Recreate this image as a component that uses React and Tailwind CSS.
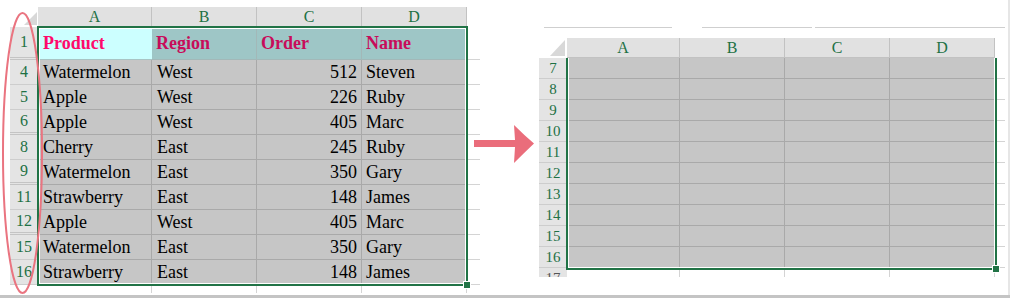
const leftRows = [
  { n: 4, p: 'Watermelon', r: 'West', o: 512, m: 'Steven' },
  { n: 5, p: 'Apple', r: 'West', o: 226, m: 'Ruby' },
  { n: 6, p: 'Apple', r: 'West', o: 405, m: 'Marc', gap: true },
  { n: 8, p: 'Cherry', r: 'East', o: 245, m: 'Ruby' },
  { n: 9, p: 'Watermelon', r: 'East', o: 350, m: 'Gary', gap: true },
  { n: 11, p: 'Strawberry', r: 'East', o: 148, m: 'James' },
  { n: 12, p: 'Apple', r: 'West', o: 405, m: 'Marc', gap: true },
  { n: 15, p: 'Watermelon', r: 'East', o: 350, m: 'Gary' },
  { n: 16, p: 'Strawberry', r: 'East', o: 148, m: 'James' },
]

const rightRows = [7, 8, 9, 10, 11, 12, 13, 14, 15, 16]

function Corner({ pts }) {
  return (
    <div className="w-[28px] h-full bg-white">
      <svg width="28" height="20">
        <polygon points={pts} fill="#d8d8d8" />
      </svg>
    </div>
  )
}

function ColHead({ w, children }) {
  return (
    <div className={`${w} h-full bg-[#e1e1e1] border-r border-b border-[#c2c2c2] flex items-center justify-center text-[16px] text-[#1e7145]`}>
      {children}
    </div>
  )
}

function RowHead({ gap, size = 'text-[16px]', children }) {
  return (
    <div
      className={`w-[28px] h-full bg-[#e4e4e4] flex items-center justify-center font-normal text-[#1e7145] ${size} ${
        gap ? 'border-b-[3px] border-double border-[#c4c4c4]' : 'border-b border-[#cdcdcd]'
      }`}
    >
      {children}
    </div>
  )
}

function Selection({ className, noTop }) {
  return (
    <div className={`absolute pointer-events-none border-[#217346] ${noTop ? 'border-x-2 border-b-2' : 'border-2'} ${className}`}>
      <div className={`w-full h-full border-white ${noTop ? 'border-x border-b' : 'border'}`} />
      <div className="absolute -right-[4px] -bottom-[4px] w-[6px] h-[6px] bg-[#217346] outline outline-1 outline-white" />
    </div>
  )
}

function LeftSheet() {
  const cell = 'h-full bg-[#c6c6c6] border-r border-b border-[#a9a9a9] flex items-center text-[18px] leading-[25px] text-black'
  const head = 'h-full bg-[#9ec6c6] border-r border-b border-[#a2b8b8] flex items-center pl-[4px] font-bold text-[18px] text-[#c80c5a]'
  return (
    <div className="relative mt-[7px] ml-[10px] w-[470px] flex flex-col">
      {/* column letters */}
      <div className="flex h-[20px]">
        <Corner pts="27,5 27,18 14,18" />
        <ColHead w="w-[114px]">A</ColHead>
        <ColHead w="w-[105px]">B</ColHead>
        <ColHead w="w-[105px]">C</ColHead>
        <ColHead w="w-[105px]">D</ColHead>
        <div className="w-[13px]" />
      </div>

      {/* header row */}
      <div className="flex h-[33px]">
        <RowHead gap>1</RowHead>
        <div className="w-[114px] h-full bg-[#ccffff] border-b border-[#a9c4c4] flex items-center pl-[5px] font-bold text-[18px] text-[#ff0a6c]">Product</div>
        <div className={`w-[105px] ${head}`}>Region</div>
        <div className={`w-[105px] ${head}`}>Order</div>
        <div className={`w-[105px] ${head}`}>Name</div>
        <div className="w-[13px] h-full border-b border-[#d4d4d4]" />
      </div>

      {/* data rows */}
      {leftRows.map((row) => (
        <div key={row.n} className="flex h-[25px]">
          <RowHead gap={row.gap}>{row.n}</RowHead>
          <div className={`w-[114px] pl-[5px] ${cell}`}>{row.p}</div>
          <div className={`w-[105px] pl-[5px] ${cell}`}>{row.r}</div>
          <div className={`w-[105px] pr-[4px] justify-end ${cell}`}>{row.o}</div>
          <div className={`w-[105px] pl-[4px] ${cell}`}>{row.m}</div>
          <div className="w-[13px] h-full border-b border-[#d4d4d4]" />
        </div>
      ))}

      {/* partial row 17 */}
      <div className="flex h-[8px]">
        <div className="w-[28px] h-full bg-white" />
        <div className="w-[114px] h-full border-r border-[#d4d4d4]" />
        <div className="w-[105px] h-full border-r border-[#d4d4d4]" />
        <div className="w-[105px] h-full border-r border-[#d4d4d4]" />
        <div className="w-[105px] h-full border-r border-[#d4d4d4]" />
      </div>

      <Selection className="left-[27px] top-[19px] w-[431px] h-[260px]" />
    </div>
  )
}

function Arrow() {
  return (
    <div className="w-[59px] h-full">
      <svg width="59" height="295" className="overflow-visible">
        <path d="M-6 140 H35 L34 125 Q44 135 54 143.5 Q44 153 34 163 L35 147 H-6 Z" fill="#ea6d7b" />
      </svg>
    </div>
  )
}

function RightSheet() {
  const cell = 'h-full bg-[#c6c6c6] border-r border-b border-[#a9a9a9]'
  return (
    <div className="relative w-[466px] flex flex-col">
      {/* leftover formula bar lines */}
      <div className="mt-[27px] flex h-px">
        <div className="ml-[5px] w-[128px] bg-[#cfcfcf]" />
        <div className="ml-[30px] w-[110px] bg-[#cfcfcf]" />
        <div className="ml-[3px] w-[190px] bg-[#cfcfcf]" />
      </div>

      <div className="mt-[10px] flex h-[20px]">
        <Corner pts="26,2 26,18 11,18" />
        <ColHead w="w-[113px]">A</ColHead>
        <ColHead w="w-[105px]">B</ColHead>
        <ColHead w="w-[105px]">C</ColHead>
        <ColHead w="w-[105px]">D</ColHead>
        <div className="w-[10px]" />
      </div>

      {rightRows.map((n) => (
        <div key={n} className="flex h-[21px]">
          <RowHead size="text-[15px]">{n}</RowHead>
          <div className={`w-[113px] ${cell}`} />
          <div className={`w-[105px] ${cell}`} />
          <div className={`w-[105px] ${cell}`} />
          <div className={`w-[105px] ${cell}`} />
          <div className="w-[10px] h-full border-b border-[#d4d4d4]" />
        </div>
      ))}

      {/* partial row 17 */}
      <div className="flex h-[9px] overflow-hidden">
        <div className="w-[28px] h-full bg-[#e4e4e4] overflow-hidden">
          <div className="h-[21px] flex items-center justify-center text-[15px] text-[#555]">17</div>
        </div>
        <div className="w-[113px] h-full border-r border-[#d4d4d4]" />
        <div className="w-[105px] h-full border-r border-[#d4d4d4]" />
        <div className="w-[105px] h-full border-r border-[#d4d4d4]" />
        <div className="w-[105px] h-full border-r border-[#d4d4d4]" />
      </div>

      <Selection noTop className="left-[27px] top-[58px] w-[431px] h-[212px]" />
    </div>
  )
}

export default function App() {
  return (
    <div className="w-[1010px] h-[298px] flex flex-col bg-white overflow-hidden font-['Liberation_Serif',serif]">
      <div className="relative h-[295px] flex border-r-2 border-[#e6e6e6]">
        <LeftSheet />
        <Arrow />
        <RightSheet />

        {/* highlight oval around the row numbers */}
        <svg width="50" height="298" className="absolute left-0 top-0 pointer-events-none">
          <ellipse cx="22.5" cy="153" rx="19.5" ry="140" fill="none" stroke="#ea7480" strokeWidth="2" />
        </svg>
      </div>
      <div className="h-[3px] bg-[#c4c4c4]" />
    </div>
  )
}
